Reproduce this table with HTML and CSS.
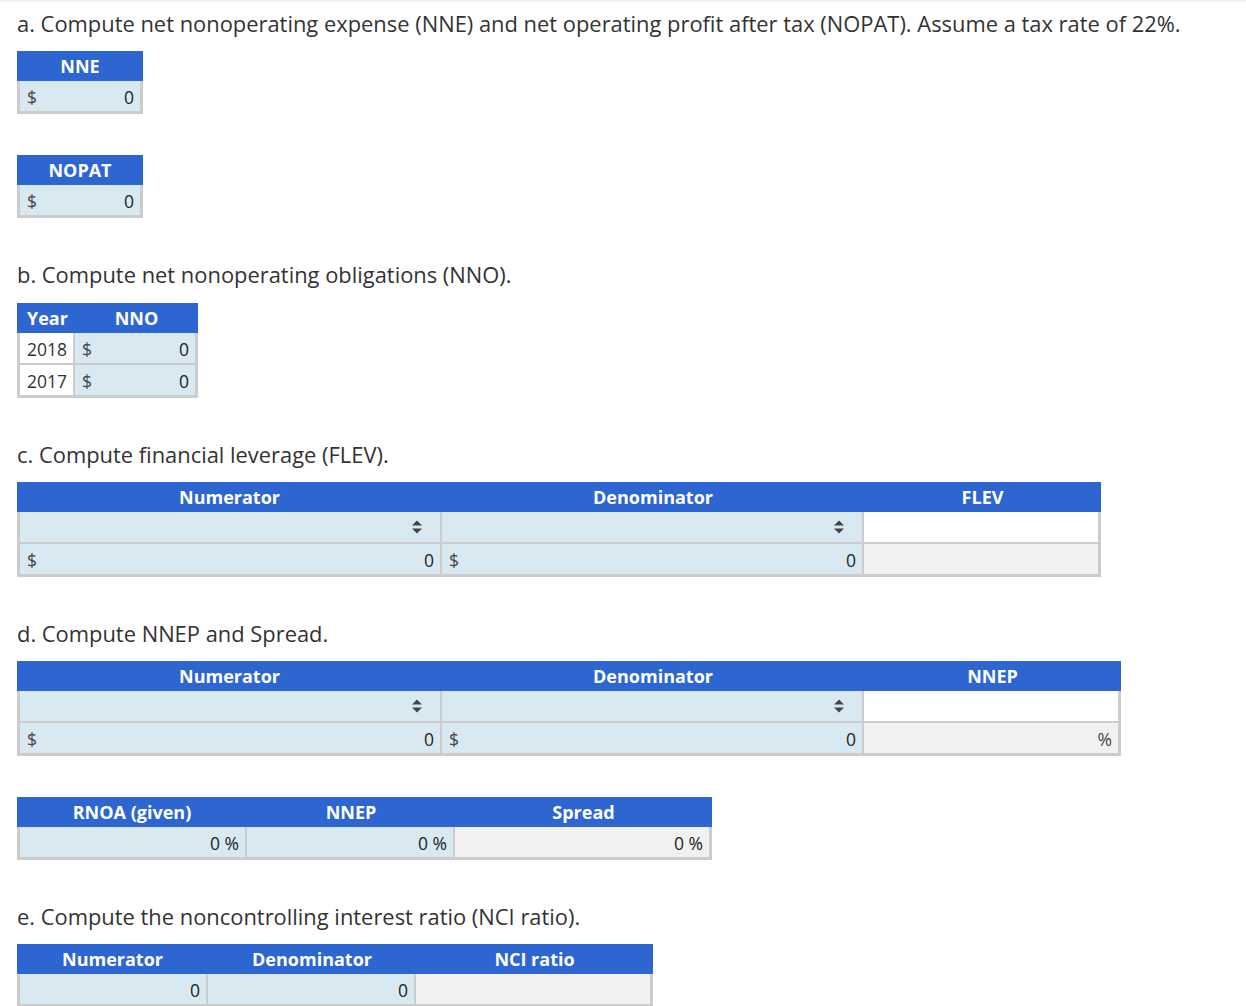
FILE: index.html
```html
<!DOCTYPE html>
<html lang="en">
<head>
<meta charset="utf-8">
<title>NNE, NOPAT, NNO, FLEV, NNEP</title>
<link rel="stylesheet" href="styles.css">
</head>
<body>
<div class="topbar"></div>
<main class="page">
  <p class="q q-first">a. Compute net nonoperating expense (NNE) and net operating profit after tax (NOPAT). Assume a tax rate of 22%.</p>
  <div class="tbl t-single">
    <div class="th">NNE</div>
    <div class="td first last b3"><span class="cur">$</span><span class="num">0</span></div>
  </div>
  <div class="tbl t-single gap41">
    <div class="th">NOPAT</div>
    <div class="td first last b3"><span class="cur">$</span><span class="num">0</span></div>
  </div>

  <p class="q q-b">b. Compute net nonoperating obligations (NNO).</p>
  <div class="tbl t-nno">
    <div class="th th-year">Year</div>
    <div class="th">NNO</div>
    <div class="td first white"><span class="yr">2018</span></div>
    <div class="td last"><span class="cur">$</span><span class="num">0</span></div>
    <div class="td first white b3"><span class="yr">2017</span></div>
    <div class="td last b3"><span class="cur">$</span><span class="num">0</span></div>
  </div>

  <p class="q">c. Compute financial leverage (FLEV).</p>
  <div class="tbl t-flev">
    <div class="th">Numerator</div>
    <div class="th">Denominator</div>
    <div class="th">FLEV</div>
    <div class="td first sel"><span class="updown"><svg width="12" height="14" viewBox="0 0 12 14"><path d="M1 5.5 L6 0.5 L11 5.5 Z M1 8.5 L6 13.5 L11 8.5 Z" fill="#444"/></svg></span></div>
    <div class="td sel"><span class="updown"><svg width="12" height="14" viewBox="0 0 12 14"><path d="M1 5.5 L6 0.5 L11 5.5 Z M1 8.5 L6 13.5 L11 8.5 Z" fill="#444"/></svg></span></div>
    <div class="td last white"></div>
    <div class="td first b3"><span class="cur">$</span><span class="num">0</span></div>
    <div class="td b3"><span class="cur">$</span><span class="num">0</span></div>
    <div class="td last gray b3"></div>
  </div>

  <p class="q">d. Compute NNEP and Spread.</p>
  <div class="tbl t-nnep">
    <div class="th">Numerator</div>
    <div class="th">Denominator</div>
    <div class="th">NNEP</div>
    <div class="td first sel"><span class="updown"><svg width="12" height="14" viewBox="0 0 12 14"><path d="M1 5.5 L6 0.5 L11 5.5 Z M1 8.5 L6 13.5 L11 8.5 Z" fill="#444"/></svg></span></div>
    <div class="td sel"><span class="updown"><svg width="12" height="14" viewBox="0 0 12 14"><path d="M1 5.5 L6 0.5 L11 5.5 Z M1 8.5 L6 13.5 L11 8.5 Z" fill="#444"/></svg></span></div>
    <div class="td last white"></div>
    <div class="td first b3"><span class="cur">$</span><span class="num">0</span></div>
    <div class="td b3"><span class="cur">$</span><span class="num">0</span></div>
    <div class="td last gray b3 end"><span class="pct">%</span></div>
  </div>
  <div class="tbl t-spread gap41">
    <div class="th">RNOA (given)</div>
    <div class="th">NNEP</div>
    <div class="th">Spread</div>
    <div class="td first b3 end"><span class="num">0 %</span></div>
    <div class="td b3 end"><span class="num">0 %</span></div>
    <div class="td last gray b3 end"><span class="num">0 %</span></div>
  </div>

  <p class="q">e. Compute the noncontrolling interest ratio (NCI ratio).</p>
  <div class="tbl t-nci">
    <div class="th">Numerator</div>
    <div class="th">Denominator</div>
    <div class="th">NCI ratio</div>
    <div class="td first b3 end"><span class="num">0</span></div>
    <div class="td b3 end"><span class="num">0</span></div>
    <div class="td last gray b3"></div>
  </div>
</main>
</body>
</html>
```

FILE: styles.css
```css
* {
  box-sizing: border-box;
}

html, body {
  margin: 0;
  padding: 0;
  background: #ffffff;
}

body {
  font-family: "Open Sans", "Noto Sans", "Liberation Sans", sans-serif;
  color: #333333;
}

.topbar {
  height: 2px;
  background: #f3f3f3;
}

.page {
  padding: 0 0 40px 17px;
}

.q {
  margin: 43px 0 13px 0;
  font-size: 21.9px;
  line-height: 28px;
  color: #333333;
  white-space: nowrap;
}

.q-first {
  margin: 8px 0 13px 0;
}

.q-b {
  margin: 43px 0 14px 0;
}

.tbl {
  display: grid;
  width: max-content;
}

.gap41 {
  margin-top: 41px;
}

.t-single {
  grid-template-columns: 126px;
}

.t-nno {
  grid-template-columns: 58px 123px;
}

.t-flev {
  grid-template-columns: 425px 422px 237px;
}

.t-nnep {
  grid-template-columns: 425px 422px 257px;
}

.t-spread {
  grid-template-columns: 230px 208px 257px;
}

.t-nci {
  grid-template-columns: 191px 208px 237px;
}

.th {
  height: 30px;
  background: #2d66d1;
  color: #ffffff;
  font-weight: 700;
  font-size: 18px;
  line-height: 30px;
  text-align: center;
  white-space: nowrap;
}

.th-year {
  text-align: left;
  padding-left: 10px;
}

.td {
  height: 32px;
  background: #d8e9f1;
  border-right: 2px solid #cccccc;
  border-bottom: 2px solid #cccccc;
  display: flex;
  align-items: center;
  justify-content: space-between;
  padding: 2px 6px 0 7px;
  font-size: 17.5px;
  line-height: 28px;
  color: #222222;
  white-space: nowrap;
}

.td.first {
  border-left: 3px solid #cccccc;
}

.td.last {
  border-right: 3px solid #cccccc;
}

.td.b3 {
  height: 33px;
  border-bottom-width: 3px;
}

.td.white {
  background: #ffffff;
}

.td.gray {
  background: #f1f1f1;
}

.td.end {
  justify-content: flex-end;
}

.td.sel {
  justify-content: flex-end;
  padding-right: 17px;
  padding-top: 0;
}

.cur {
  color: #444444;
}

.num {
  color: #222222;
}

.yr {
  color: #333333;
}

.pct {
  color: #444444;
  padding-right: 0;
}

.updown {
  display: flex;
  align-items: center;
  width: 12px;
  height: 14px;
}

.updown svg {
  display: block;
}
```
